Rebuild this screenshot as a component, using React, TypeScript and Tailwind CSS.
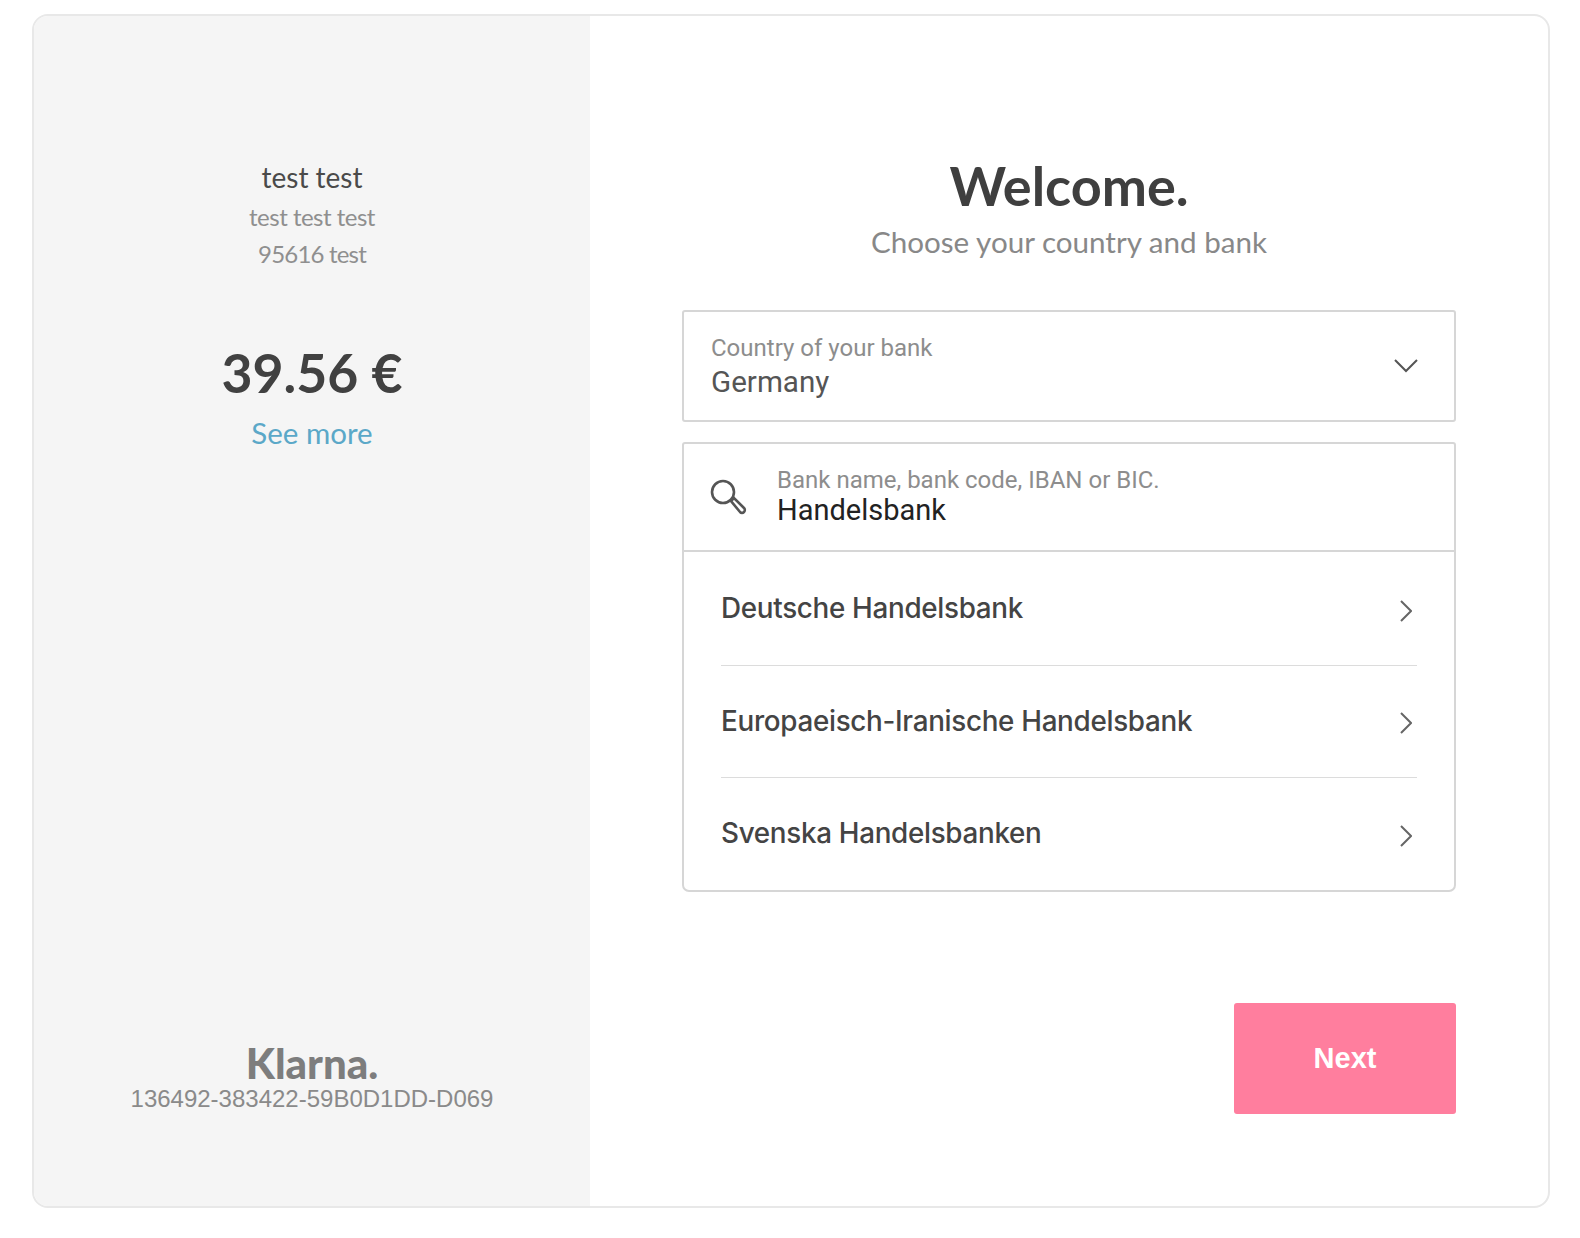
function Chevron() {
  return (
    <svg width="12" height="24" viewBox="0 0 12 24" fill="none" stroke="#666" strokeWidth="2" className="shrink-0 mt-[3px]">
      <path d="M1 2l10 10L1 22" />
    </svg>
  );
}
function Row({ name, size }: { name: string; size: "first" | "middle" | "last" }) {
  const rowClass =
    size === "first"
      ? "h-[113px] border-b border-[#dcdcdc]"
      : size === "middle"
        ? "h-[112px] border-b border-[#dcdcdc]"
        : "h-[112px]";
  return (
    <div className={`flex items-center justify-between pr-[5px] ${rowClass}`}>
      <span className="text-[27.8px] font-medium text-[#444444] font-['Inter',sans-serif] tracking-[-0.3px]">{name}</span>
      <Chevron />
    </div>
  );
}
export default function App() {
  return (
    <div className="bg-white w-[1580px] h-[1238px] pt-[14px] pl-[32px]">
      <div className="w-[1518px] h-[1194px] flex rounded-[16px] border-2 border-[#e8e8e8] overflow-hidden bg-white">
        <div className="w-[556px] bg-[#f5f5f5] flex flex-col items-center pt-[143px] pb-[92px] font-['Lato',sans-serif]">
          <div className="text-[28px] leading-[36px] text-[#4a4a4a]">test test</div>
          <div className="text-[24px] leading-[36px] mt-[4px] text-[#8f8f8f] tracking-[-0.5px]">test test test</div>
          <div className="text-[24px] leading-[37px] text-[#8f8f8f] tracking-[-0.8px]">95616 test</div>
          <div className="text-[53.5px] leading-[60px] font-bold text-[#414141] mt-[70px]">39.56 €</div>
          <div className="text-[29.5px] leading-[36px] text-[#5ba8c8] mt-[13px]">See more</div>
          <div className="mt-auto text-[42px] leading-[40px] font-black text-[#7d7d7d]">Klarna.</div>
          <div className="text-[24px] leading-[30px] text-[#8a8a8a] font-['Liberation_Sans',sans-serif] mt-[1px]">136492-383422-59B0D1DD-D069</div>
        </div>
        <div className="flex-1 flex flex-col px-[92px] pt-[136px] pb-[92px]">
          <h1 className="text-center text-[54px] leading-[68px] font-bold text-[#3f3f3f] font-['Lato',sans-serif]">Welcome.</h1>
          <p className="text-center text-[29.6px] leading-[38px] text-[#888888] font-['Lato',sans-serif] mt-[3px]">Choose your country and bank</p>
          <div className="mt-[49px] h-[112px] border-2 border-[#d6d6d6] rounded-[3px] flex items-center justify-between pl-[27px] pr-[35px] font-['Roboto',sans-serif]">
            <div className="-mt-[4px]">
              <div className="text-[24px] leading-[34px] text-[#8d8d8d] mt-[1px]">Country of your bank</div>
              <div className="text-[29.6px] leading-[34px] text-[#555555]">Germany</div>
            </div>
            <svg width="26" height="16" viewBox="0 0 26 16" fill="none" stroke="#555" strokeWidth="2"><path d="M2 2l11 11L24 2" /></svg>
          </div>
          <div className="mt-[20px] border-2 border-[#d6d6d6] rounded-t-[3px] rounded-b-[7px] font-['Roboto',sans-serif]">
            <div className="h-[108px] border-b-2 border-[#d6d6d6] flex items-center pl-[25px]">
              <svg width="40" height="40" viewBox="0 0 40 40" fill="none" stroke="#555" strokeWidth="2.6" className="shrink-0">
                <circle cx="14" cy="15" r="11" />
                <path d="M22 24l3-3 10 10a2.4 2.4 0 0 1-4 4z" />
              </svg>
              <div className="ml-[28px] -mt-[4px]">
                <div className="text-[24px] leading-[30px] text-[#8d8d8d]">Bank name, bank code, IBAN or BIC.</div>
                <div className="text-[29px] leading-[31px] text-[#222222]">Handelsbank</div>
              </div>
            </div>
            <div className="pl-[37px] pr-[37px] pt-[1px]">
              <Row name="Deutsche Handelsbank" size="first" />
              <Row name="Europaeisch-Iranische Handelsbank" size="middle" />
              <Row name="Svenska Handelsbanken" size="last" />
            </div>
          </div>
          <div className="mt-auto self-end w-[222px] h-[111px] bg-[#ff7e9e] rounded-[3px] flex items-center justify-center text-white text-[29px] font-bold font-['Liberation_Sans',sans-serif]">Next</div>
        </div>
      </div>
    </div>
  );
}
